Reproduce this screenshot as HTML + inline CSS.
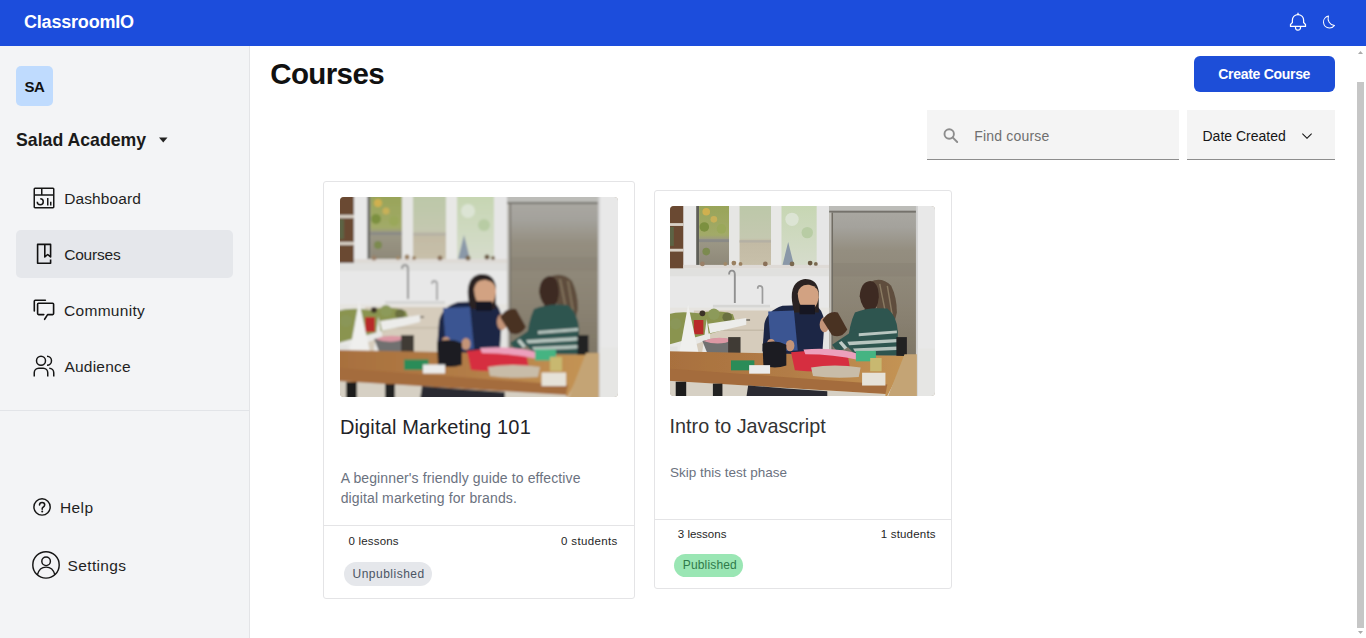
<!DOCTYPE html>
<html><head><meta charset="utf-8">
<style>
*{margin:0;padding:0;box-sizing:border-box}
html,body{width:1366px;height:638px;overflow:hidden;background:#fff;font-family:"Liberation Sans",sans-serif;color:#161616}
.a{position:absolute;white-space:nowrap;line-height:1}
svg.i{position:absolute;overflow:visible}
#hdr{position:absolute;left:0;top:0;width:1366px;height:46px;background:#1c4ddc}
#side{position:absolute;left:0;top:46px;width:250px;height:592px;background:#f3f4f6;border-right:1px solid #e3e4e7}
</style></head><body>
<div id="hdr"></div>
<div class="a" style="left:24px;top:12.7px;font-size:18px;font-weight:bold;color:#fff;letter-spacing:-0.2px">ClassroomIO</div>
<!-- bell -->
<svg class="i" style="left:1288px;top:12px" width="20" height="20" viewBox="0 0 32 32" fill="#fff"><path d="M28.707 19.293 26 16.586V13a10.014 10.014 0 0 0-9-9.95V1h-2v2.05A10.014 10.014 0 0 0 6 13v3.586l-2.707 2.707A1 1 0 0 0 3 20v3a1 1 0 0 0 1 1h7v.777a5.152 5.152 0 0 0 4.5 5.199A5.006 5.006 0 0 0 21 25v-1h7a1 1 0 0 0 1-1v-3a1 1 0 0 0-.293-.707zM19 25a3 3 0 0 1-6 0v-1h6zm8-3H5v-1.586l2.707-2.707A1 1 0 0 0 8 17v-4a8 8 0 0 1 16 0v4a1 1 0 0 0 .293.707L27 20.414z"/></svg>
<!-- moon -->
<svg class="i" style="left:1321px;top:13.5px" width="16" height="16" viewBox="0 0 32 32" fill="#fff"><path d="M13.503 5.414a15.076 15.076 0 0 0 11.593 18.194 11.113 11.113 0 0 1-7.975 3.39c-.138 0-.278.005-.418 0a11.094 11.094 0 0 1-3.2-21.584M14.98 3a1.002 1.002 0 0 0-.175.016 13.096 13.096 0 0 0 1.825 25.981c.164.006.328 0 .49 0a13.072 13.072 0 0 0 10.703-5.555 1.011 1.011 0 0 0-.783-1.565A13.08 13.08 0 0 1 15.89 4.38 1.015 1.015 0 0 0 14.98 3z"/></svg>

<div id="side"></div>
<div style="position:absolute;left:16px;top:66px;width:37px;height:40px;background:#bfdbfe;border-radius:5px"></div>
<div class="a" style="left:24.5px;top:79px;font-size:15px;font-weight:bold;letter-spacing:-0.5px;color:#111">SA</div>
<div class="a" style="left:16px;top:132px;font-size:17.7px;font-weight:bold;color:#1a1a1a">Salad Academy</div>
<svg class="i" style="left:159px;top:137px" width="9" height="6" viewBox="0 0 9 6"><path d="M0 0.5H8.5L4.25 5.5z" fill="#222"/></svg>

<div style="position:absolute;left:16px;top:230px;width:217px;height:48px;background:#e5e7eb;border-radius:5px"></div>
<!-- dashboard icon -->
<svg class="i" style="left:32px;top:186px" width="24" height="24" viewBox="0 0 32 32" fill="#161616"><path d="M24 21h2v5h-2zM20 16h2v10h-2zM11 26a5.006 5.006 0 0 1-5-5h2a3 3 0 1 0 3-3v-2a5 5 0 0 1 0 10z"/><path d="M28 2H4a2.002 2.002 0 0 0-2 2v24a2.002 2.002 0 0 0 2 2h24a2.003 2.003 0 0 0 2-2V4a2.002 2.002 0 0 0-2-2zm0 9H14V4h14zM12 4v7H4V4zM4 28V13h24l.002 15z"/></svg>
<div class="a" style="left:64.2px;top:190.6px;font-size:15.5px;letter-spacing:0.1px;color:#1f1f1f">Dashboard</div>
<!-- courses icon -->
<svg class="i" style="left:0;top:0" width="1" height="1"><path d="M50.6 259.4V263.3H37.6V244.4H50.6V256.9L47.7 254.5L44.8 256.9V244.4" fill="none" stroke="#111" stroke-width="1.6" stroke-linejoin="round"/></svg>
<div class="a" style="left:64.2px;top:246.9px;font-size:15.5px;letter-spacing:-0.2px;color:#1f1f1f">Courses</div>
<!-- community icon -->
<svg class="i" style="left:0;top:0" width="1" height="1"><path d="M34.3 311V301.3Q34.3 300.3 35.3 300.3H45.4" fill="none" stroke="#111" stroke-width="1.6" stroke-linecap="round"/><path d="M43.8 314.6H38.6Q37.6 314.6 37.6 313.6V304.3Q37.6 303.3 38.6 303.3H52.6Q53.6 303.3 53.6 304.3V313.6Q53.6 314.6 52.6 314.6H47.6L44.6 319.3" fill="none" stroke="#111" stroke-width="1.6" stroke-linecap="round" stroke-linejoin="round"/></svg>
<div class="a" style="left:64px;top:302.9px;font-size:15.5px;letter-spacing:0.3px;color:#1f1f1f">Community</div>
<!-- audience icon -->
<svg class="i" style="left:32px;top:354px" width="24" height="24" viewBox="0 0 32 32" fill="#161616"><path d="M30 30h-2v-5a5.006 5.006 0 0 0-5-5v-2a7.008 7.008 0 0 1 7 7zM22 30h-2v-5a5.006 5.006 0 0 0-5-5H9a5.006 5.006 0 0 0-5 5v5H2v-5a7.008 7.008 0 0 1 7-7h6a7.008 7.008 0 0 1 7 7zM20 2v2a5 5 0 0 1 0 10v2a7 7 0 0 0 0-14zM12 4a5 5 0 1 1-5 5 5 5 0 0 1 5-5m0-2a7 7 0 1 0 7 7 7 7 0 0 0-7-7z"/></svg>
<div class="a" style="left:64.5px;top:358.6px;font-size:15.5px;letter-spacing:0.2px;color:#1f1f1f">Audience</div>

<div style="position:absolute;left:0;top:410px;width:249px;height:1px;background:#e2e4e8"></div>
<!-- help -->
<svg class="i" style="left:0;top:0" width="1" height="1"><circle cx="42.05" cy="506.95" r="8.15" fill="none" stroke="#161616" stroke-width="1.45"/><path d="M39.5 505Q39.5 502.4 42.1 502.4Q44.7 502.4 44.7 504.8Q44.7 506.3 43.1 507.2Q42.2 507.7 42.2 508.8V509.2" fill="none" stroke="#161616" stroke-width="1.55" stroke-linecap="round"/><circle cx="42.2" cy="511.6" r="1" fill="#161616"/></svg>
<div class="a" style="left:60px;top:500.1px;font-size:15.5px;letter-spacing:0.4px;color:#1f1f1f">Help</div>
<!-- settings -->
<svg class="i" style="left:0;top:0" width="1" height="1"><circle cx="46" cy="564.9" r="13.2" fill="none" stroke="#161616" stroke-width="1.45"/><circle cx="46.1" cy="561.3" r="4.3" fill="none" stroke="#161616" stroke-width="1.45"/><path d="M37.3 575Q39.3 567.1 46.1 567.1Q52.9 567.1 55 575" fill="none" stroke="#161616" stroke-width="1.45"/></svg>
<div class="a" style="left:67.6px;top:557.9px;font-size:15.5px;letter-spacing:0.35px;color:#1f1f1f">Settings</div>

<!-- main -->
<div class="a" style="left:270.2px;top:59.1px;font-size:29.5px;font-weight:bold;letter-spacing:-0.6px;color:#111">Courses</div>
<div style="position:absolute;left:1194px;top:56px;width:141px;height:36px;background:#1d4ed8;border-radius:6px"></div>
<div class="a" style="left:1218.3px;top:66.85px;font-size:14px;font-weight:bold;letter-spacing:-0.3px;color:#fff">Create Course</div>

<div style="position:absolute;left:927px;top:110px;width:252px;height:50px;background:#f4f4f4;border-bottom:1px solid #8d8d8d"></div>
<svg class="i" style="left:0;top:0" width="1" height="1"><circle cx="949.2" cy="134" r="4.7" fill="none" stroke="#8d8d8d" stroke-width="1.9"/><path d="M952.6 137.4L957.2 142" stroke="#8d8d8d" stroke-width="1.9" stroke-linecap="round"/></svg>
<div class="a" style="left:974.2px;top:128.95px;font-size:14px;letter-spacing:0.2px;color:#6f6f6f">Find course</div>
<div style="position:absolute;left:1187px;top:110px;width:148px;height:50px;background:#f4f4f4;border-bottom:1px solid #8d8d8d"></div>
<div class="a" style="left:1202.5px;top:128.75px;font-size:14px;color:#161616">Date Created</div>
<svg class="i" style="left:1299px;top:128px" width="16" height="16" viewBox="0 0 32 32" fill="#161616"><path d="M16 22 6 12l1.4-1.4 8.6 8.6 8.6-8.6L26 12z"/></svg>

<!-- card 1 -->
<div style="position:absolute;left:323px;top:181px;width:312px;height:418px;border:1px solid #e4e4e6;border-radius:3px;background:#fff"></div>
<div style="position:absolute;left:324px;top:525px;width:310px;height:1px;background:#e4e4e6"></div>
<div id="ph1" style="position:absolute;left:340px;top:197px;width:278px;height:200px;border-radius:4px;overflow:hidden;background:#a89a84"><svg viewBox="0 0 278 200" preserveAspectRatio="none" width="100%" height="100%">
<defs>
<filter id="bl" x="-5%" y="-5%" width="110%" height="110%"><feGaussianBlur stdDeviation="0.8"/></filter>
<linearGradient id="fr" x1="0" y1="0" x2="0" y2="1"><stop offset="0" stop-color="#acaaa4"/><stop offset="0.15" stop-color="#a4a29c"/><stop offset="0.3" stop-color="#948e80"/><stop offset="0.7" stop-color="#8a8272"/><stop offset="1" stop-color="#7e7666"/></linearGradient>
<linearGradient id="p1" x1="0" y1="0" x2="0" y2="1"><stop offset="0" stop-color="#98a458"/><stop offset="0.5" stop-color="#a2aa68"/><stop offset="0.58" stop-color="#9c9886"/><stop offset="1" stop-color="#8e8878"/></linearGradient>
<linearGradient id="p2" x1="0" y1="0" x2="0" y2="1"><stop offset="0" stop-color="#bcc8a8"/><stop offset="0.55" stop-color="#c4c8b0"/><stop offset="0.6" stop-color="#c2baa4"/><stop offset="1" stop-color="#c8c0aa"/></linearGradient>
<linearGradient id="p3" x1="0" y1="0" x2="0" y2="1"><stop offset="0" stop-color="#c6d6b2"/><stop offset="1" stop-color="#d6dccc"/></linearGradient>
<linearGradient id="tb" x1="0" y1="0" x2="1" y2="0"><stop offset="0" stop-color="#a8703e"/><stop offset="0.5" stop-color="#b27c46"/><stop offset="1" stop-color="#c49454"/></linearGradient>
</defs>
<g filter="url(#bl)">
<rect x="-2" y="-2" width="282" height="204" fill="#e4e4e2"/>
<!-- shelf -->
<rect x="-2" y="-2" width="16.5" height="68" fill="#6a4a30"/>
<rect x="-2" y="18" width="16" height="3" fill="#d8d0c6"/>
<rect x="-2" y="45" width="16" height="3" fill="#d8d0c6"/>
<rect x="-2" y="22" width="6" height="20" fill="#5c6444"/>
<!-- window -->
<rect x="14" y="-2" width="14" height="68" fill="#e8e8e8"/>
<rect x="27.5" y="-2" width="3" height="65" fill="#5e5e58"/>
<rect x="30.5" y="-2" width="31.5" height="65" fill="url(#p1)"/>
<circle cx="38" cy="6" r="4" fill="#d0b050"/><circle cx="46" cy="14" r="3.5" fill="#c8b058"/><circle cx="36" cy="22" r="5" fill="#7c9040"/><circle cx="54" cy="24" r="5" fill="#9aa85a"/><circle cx="38" cy="48" r="4" fill="#7c8a50"/>
<rect x="30.5" y="35" width="31.5" height="3" fill="#8a8a86"/>
<rect x="62" y="-2" width="11" height="68" fill="#e6e6e4"/>
<rect x="73" y="-2" width="33" height="65" fill="url(#p2)"/>
<rect x="73" y="36" width="33" height="2.5" fill="#b4b0a4"/>
<rect x="106" y="-2" width="11" height="68" fill="#e8e8e6"/>
<rect x="117" y="-2" width="37" height="65" fill="url(#p3)"/>
<circle cx="128" cy="14" r="7" fill="#dce4d4"/><circle cx="144" cy="28" r="6" fill="#b8cca4"/>
<path d="M118 62 L124 38 L130 62z" fill="#8a98a8"/>
<rect x="154" y="-2" width="13" height="68" fill="#e6e6e6"/>
<rect x="14" y="62" width="153" height="4" fill="#dedad6"/>
<circle cx="34" cy="61" r="2.5" fill="#9a8068"/><circle cx="58" cy="61" r="2" fill="#a08868"/><circle cx="67" cy="60" r="2.5" fill="#9a8060"/><circle cx="74" cy="61" r="2" fill="#9a8060"/><circle cx="100" cy="61" r="2.5" fill="#8a7058"/><circle cx="128" cy="61" r="2.5" fill="#7a6850"/><circle cx="147" cy="60" r="2.5" fill="#6a5840"/><circle cx="153" cy="61" r="2" fill="#7a6850"/>
<!-- wall -->
<rect x="-2" y="66" width="169" height="43" fill="#e8e8e8"/>
<rect x="-2" y="66" width="169" height="8" fill="#e0e0de"/>
<path d="M68 102 V72 Q68 68 65 68 Q62 68 62 72" fill="none" stroke="#909090" stroke-width="2"/>
<path d="M97 103 V87 Q97 84 94 84 Q92 84 92 87" fill="none" stroke="#9c9c9c" stroke-width="1.8"/>
<rect x="45" y="104" width="60" height="3" fill="#d6d6d4"/>
<!-- fridge -->
<rect x="167" y="-2" width="92" height="162" fill="url(#fr)"/>
<rect x="167" y="-2" width="92" height="7" fill="#bcbcb8"/>
<rect x="167" y="5" width="92" height="2" fill="#74726c"/>
<rect x="167" y="7" width="2.5" height="150" fill="#c0beb8"/>
<rect x="169.5" y="7" width="1.5" height="150" fill="#706c64"/>
<rect x="171" y="60" width="88" height="14" fill="#7e786c" opacity="0.25"/>
<!-- right wall -->
<rect x="259" y="-2" width="21" height="204" fill="#e8e8e8"/>
<rect x="258" y="-2" width="2" height="204" fill="#d0d0d0"/>
<rect x="260" y="150" width="20" height="52" fill="#e6e6e4"/>
<!-- counter -->
<rect x="-2" y="107" width="169" height="5" fill="#e6e4e0"/>
<rect x="25" y="110" width="80" height="47" fill="#d6ccbc"/>
<rect x="72" y="119" width="12" height="2" fill="#857e74"/>
<rect x="25" y="130" width="80" height="1.5" fill="#c4baa8"/>
<!-- plants -->
<path d="M-2 114 Q10 110 30 113 Q50 108 66 114 L70 126 L-2 148z" fill="#8a9450"/>
<circle cx="6" cy="124" r="6" fill="#8a9658"/><circle cx="46" cy="114" r="6" fill="#8c9a5a"/><circle cx="60" cy="117" r="5" fill="#6a7040"/><circle cx="34" cy="113" r="3" fill="#3a3028"/>
<rect x="25" y="120" width="10" height="15" fill="#b82a2a"/>
<path d="M40 124 L80 118 L80 125 L42 134z" fill="#ececea"/>
<path d="M-2 146 L42 134 L42 140 L-2 156z" fill="#e8e8e6"/>
<rect x="-2" y="148" width="10" height="18" fill="#e2e2e0"/>
<!-- cones -->
<path d="M19 104 L8 164 L32 164z" fill="#efefed"/>
<path d="M38.5 119 L33 160 L44 160z" fill="#e8e8e6"/>
<!-- bowl -->
<path d="M34 142 Q50 137 67 141 L62 157 Q50 162 40 157z" fill="#707070"/>
<path d="M35 142 Q50 136 66 141 Q52 148 35 142z" fill="#dc98a4"/>
<path d="M42 158 L58 158 L56 162 L44 162z" fill="#909090"/>
<rect x="61" y="138" width="13" height="17" fill="#403a36"/>
<!-- woman 1 -->
<path d="M97 152 L99 124 Q102 110 118 105 L152 104 Q160 108 162 122 L160 152 L130 160 L100 160z" fill="#1e2644"/>
<path d="M128 100 Q126 80 140 77 Q154 76 156 90 L156 112 L130 112z" fill="#2a2420"/>
<path d="M134 92 Q136 82 146 83 Q157 85 156 96 Q154 110 144 110 Q135 108 134 92z" fill="#d2a282"/>
<rect x="136" y="104" width="16" height="10" fill="#161620"/>
<path d="M103 111 L130 110 L134 152 L106 153z" fill="#3a5592"/>
<ellipse cx="162" cy="125" rx="5" ry="8" fill="#c49478"/>
<ellipse cx="126" cy="147" rx="4.5" ry="6" fill="#c49478"/>
<ellipse cx="106" cy="144" rx="4" ry="4" fill="#c49478"/>
<!-- woman 2 -->
<path d="M210 80 Q222 74 232 84 Q238 96 238 112 L236 120 L222 118 L214 100z" fill="#5e4e3e"/>
<path d="M220 82 L226 112 M228 84 L233 114" stroke="#8a7a62" stroke-width="1.5" fill="none"/>
<path d="M199 95 Q200 80 210 79 Q219 80 219 96 Q218 110 210 111 Q201 109 199 95z" fill="#3e2a22"/>
<path d="M204 108 L218 108 L219 116 L206 116z" fill="#3a2a24"/>
<path d="M194 112 Q208 106 228 108 Q238 116 239 132 L239 157 L196 158 L186 148 Q188 124 194 112z" fill="#2f5450"/>
<path d="M194 130 L170 146 L176 154 L199 142z" fill="#2f5450"/>
<path d="M198 134 L238 131 L238 134 L198 137z" fill="#b8c6c0"/>
<path d="M186 143 L238 140 L238 143.5 L188 146.5z" fill="#b8c6c0"/>
<path d="M192 150 L238 148 L238 151.5 L194 153.5z" fill="#b4c2bc"/>
<path d="M180 142 L186 149 L183 151 L177 144z" fill="#c0ccc6"/>
<path d="M160 120 Q166 110 176 112 L186 130 Q180 140 170 136z" fill="#4a3024"/>
<rect x="237.5" y="138" width="11" height="21" fill="#222224"/>
<!-- table -->
<path d="M-2 153 L246 158 L247 162 L228 200 L-2 200z" fill="url(#tb)"/>
<path d="M-2 171 L228 188 L226 198 L-2 184z" fill="#a46c3c"/>
<path d="M-2 184 L226 198 L226 202 L-2 202z" fill="#d6d0c4"/>
<rect x="6" y="185" width="11" height="17" fill="#1e1e1e"/>
<rect x="45" y="187" width="10" height="15" fill="#222"/>
<path d="M82 189 L122 192 L165 195 L165 202 L80 202z" fill="#2a2a30"/>
<path d="M246 156 L259 156 L259 202 L228 202z" fill="#c4a474"/>
<!-- items -->
<path d="M97 145 Q110 140 122 146 L122 168 Q110 172 98 168z" fill="#1c1c22"/>
<path d="M127 154 Q160 150 186 154 L189 172 Q160 176 131 173z" fill="#d62e40"/>
<path d="M140 151 Q175 148 203 157 L198 162 Q172 156 142 156z" fill="#eca0bc"/>
<path d="M148 170 Q172 166 200 170 L198 180 Q172 182 150 179z" fill="#c8bca8"/>
<rect x="64" y="162.5" width="24.5" height="10.5" fill="#2c8c58"/>
<rect x="83" y="167.5" width="22" height="9" fill="#ebebea"/>
<rect x="195" y="152.5" width="21" height="11" fill="#44b482"/>
<rect x="210" y="160" width="12" height="14" fill="#c8b870"/>
<rect x="201.5" y="175.5" width="24.5" height="13.5" fill="#e6e2d8"/>
</g>
</svg>






</div>
<div class="a" style="left:339.9px;top:416.9px;font-size:20px;letter-spacing:0.15px;color:#1f2328">Digital Marketing 101</div>
<div class="a" style="left:340.7px;top:467.5px;font-size:14px;line-height:20px;letter-spacing:0.12px;color:#6b7280">A beginner's friendly guide to effective<br>digital marketing for brands.</div>
<div class="a" style="left:348.4px;top:535.8px;font-size:11.5px;letter-spacing:0.2px;color:#1f1f1f">0 lessons</div>
<div class="a" style="left:561px;top:535.8px;font-size:11.5px;letter-spacing:0.35px;color:#1f1f1f">0 students</div>
<div style="position:absolute;left:344px;top:562px;width:88px;height:24px;background:#e5e7eb;border-radius:12px"></div>
<div class="a" style="left:352.5px;top:567.5px;font-size:12px;letter-spacing:0.5px;color:#4b5563">Unpublished</div>

<!-- card 2 -->
<div style="position:absolute;left:654px;top:190px;width:298px;height:399px;border:1px solid #e4e4e6;border-radius:3px;background:#fff"></div>
<div style="position:absolute;left:655px;top:519px;width:296px;height:1px;background:#e4e4e6"></div>
<div id="ph2" style="position:absolute;left:670px;top:206px;width:265px;height:190px;border-radius:4px;overflow:hidden;background:#a89a84"><svg viewBox="0 0 278 200" preserveAspectRatio="none" width="100%" height="100%">
<defs>
<filter id="bl2" x="-5%" y="-5%" width="110%" height="110%"><feGaussianBlur stdDeviation="0.8"/></filter>
<linearGradient id="fr2" x1="0" y1="0" x2="0" y2="1"><stop offset="0" stop-color="#acaaa4"/><stop offset="0.15" stop-color="#a4a29c"/><stop offset="0.3" stop-color="#948e80"/><stop offset="0.7" stop-color="#8a8272"/><stop offset="1" stop-color="#7e7666"/></linearGradient>
<linearGradient id="p12" x1="0" y1="0" x2="0" y2="1"><stop offset="0" stop-color="#98a458"/><stop offset="0.5" stop-color="#a2aa68"/><stop offset="0.58" stop-color="#9c9886"/><stop offset="1" stop-color="#8e8878"/></linearGradient>
<linearGradient id="p22" x1="0" y1="0" x2="0" y2="1"><stop offset="0" stop-color="#bcc8a8"/><stop offset="0.55" stop-color="#c4c8b0"/><stop offset="0.6" stop-color="#c2baa4"/><stop offset="1" stop-color="#c8c0aa"/></linearGradient>
<linearGradient id="p32" x1="0" y1="0" x2="0" y2="1"><stop offset="0" stop-color="#c6d6b2"/><stop offset="1" stop-color="#d6dccc"/></linearGradient>
<linearGradient id="tb2" x1="0" y1="0" x2="1" y2="0"><stop offset="0" stop-color="#a8703e"/><stop offset="0.5" stop-color="#b27c46"/><stop offset="1" stop-color="#c49454"/></linearGradient>
</defs>
<g filter="url(#bl2)">
<rect x="-2" y="-2" width="282" height="204" fill="#e4e4e2"/>
<!-- shelf -->
<rect x="-2" y="-2" width="16.5" height="68" fill="#6a4a30"/>
<rect x="-2" y="18" width="16" height="3" fill="#d8d0c6"/>
<rect x="-2" y="45" width="16" height="3" fill="#d8d0c6"/>
<rect x="-2" y="22" width="6" height="20" fill="#5c6444"/>
<!-- window -->
<rect x="14" y="-2" width="14" height="68" fill="#e8e8e8"/>
<rect x="27.5" y="-2" width="3" height="65" fill="#5e5e58"/>
<rect x="30.5" y="-2" width="31.5" height="65" fill="url(#p12)"/>
<circle cx="38" cy="6" r="4" fill="#d0b050"/><circle cx="46" cy="14" r="3.5" fill="#c8b058"/><circle cx="36" cy="22" r="5" fill="#7c9040"/><circle cx="54" cy="24" r="5" fill="#9aa85a"/><circle cx="38" cy="48" r="4" fill="#7c8a50"/>
<rect x="30.5" y="35" width="31.5" height="3" fill="#8a8a86"/>
<rect x="62" y="-2" width="11" height="68" fill="#e6e6e4"/>
<rect x="73" y="-2" width="33" height="65" fill="url(#p22)"/>
<rect x="73" y="36" width="33" height="2.5" fill="#b4b0a4"/>
<rect x="106" y="-2" width="11" height="68" fill="#e8e8e6"/>
<rect x="117" y="-2" width="37" height="65" fill="url(#p32)"/>
<circle cx="128" cy="14" r="7" fill="#dce4d4"/><circle cx="144" cy="28" r="6" fill="#b8cca4"/>
<path d="M118 62 L124 38 L130 62z" fill="#8a98a8"/>
<rect x="154" y="-2" width="13" height="68" fill="#e6e6e6"/>
<rect x="14" y="62" width="153" height="4" fill="#dedad6"/>
<circle cx="34" cy="61" r="2.5" fill="#9a8068"/><circle cx="58" cy="61" r="2" fill="#a08868"/><circle cx="67" cy="60" r="2.5" fill="#9a8060"/><circle cx="74" cy="61" r="2" fill="#9a8060"/><circle cx="100" cy="61" r="2.5" fill="#8a7058"/><circle cx="128" cy="61" r="2.5" fill="#7a6850"/><circle cx="147" cy="60" r="2.5" fill="#6a5840"/><circle cx="153" cy="61" r="2" fill="#7a6850"/>
<!-- wall -->
<rect x="-2" y="66" width="169" height="43" fill="#e8e8e8"/>
<rect x="-2" y="66" width="169" height="8" fill="#e0e0de"/>
<path d="M68 102 V72 Q68 68 65 68 Q62 68 62 72" fill="none" stroke="#909090" stroke-width="2"/>
<path d="M97 103 V87 Q97 84 94 84 Q92 84 92 87" fill="none" stroke="#9c9c9c" stroke-width="1.8"/>
<rect x="45" y="104" width="60" height="3" fill="#d6d6d4"/>
<!-- fridge -->
<rect x="167" y="-2" width="92" height="162" fill="url(#fr2)"/>
<rect x="167" y="-2" width="92" height="7" fill="#bcbcb8"/>
<rect x="167" y="5" width="92" height="2" fill="#74726c"/>
<rect x="167" y="7" width="2.5" height="150" fill="#c0beb8"/>
<rect x="169.5" y="7" width="1.5" height="150" fill="#706c64"/>
<rect x="171" y="60" width="88" height="14" fill="#7e786c" opacity="0.25"/>
<!-- right wall -->
<rect x="259" y="-2" width="21" height="204" fill="#e8e8e8"/>
<rect x="258" y="-2" width="2" height="204" fill="#d0d0d0"/>
<rect x="260" y="150" width="20" height="52" fill="#e6e6e4"/>
<!-- counter -->
<rect x="-2" y="107" width="169" height="5" fill="#e6e4e0"/>
<rect x="25" y="110" width="80" height="47" fill="#d6ccbc"/>
<rect x="72" y="119" width="12" height="2" fill="#857e74"/>
<rect x="25" y="130" width="80" height="1.5" fill="#c4baa8"/>
<!-- plants -->
<path d="M-2 114 Q10 110 30 113 Q50 108 66 114 L70 126 L-2 148z" fill="#8a9450"/>
<circle cx="6" cy="124" r="6" fill="#8a9658"/><circle cx="46" cy="114" r="6" fill="#8c9a5a"/><circle cx="60" cy="117" r="5" fill="#6a7040"/><circle cx="34" cy="113" r="3" fill="#3a3028"/>
<rect x="25" y="120" width="10" height="15" fill="#b82a2a"/>
<path d="M40 124 L80 118 L80 125 L42 134z" fill="#ececea"/>
<path d="M-2 146 L42 134 L42 140 L-2 156z" fill="#e8e8e6"/>
<rect x="-2" y="148" width="10" height="18" fill="#e2e2e0"/>
<!-- cones -->
<path d="M19 104 L8 164 L32 164z" fill="#efefed"/>
<path d="M38.5 119 L33 160 L44 160z" fill="#e8e8e6"/>
<!-- bowl -->
<path d="M34 142 Q50 137 67 141 L62 157 Q50 162 40 157z" fill="#707070"/>
<path d="M35 142 Q50 136 66 141 Q52 148 35 142z" fill="#dc98a4"/>
<path d="M42 158 L58 158 L56 162 L44 162z" fill="#909090"/>
<rect x="61" y="138" width="13" height="17" fill="#403a36"/>
<!-- woman 1 -->
<path d="M97 152 L99 124 Q102 110 118 105 L152 104 Q160 108 162 122 L160 152 L130 160 L100 160z" fill="#1e2644"/>
<path d="M128 100 Q126 80 140 77 Q154 76 156 90 L156 112 L130 112z" fill="#2a2420"/>
<path d="M134 92 Q136 82 146 83 Q157 85 156 96 Q154 110 144 110 Q135 108 134 92z" fill="#d2a282"/>
<rect x="136" y="104" width="16" height="10" fill="#161620"/>
<path d="M103 111 L130 110 L134 152 L106 153z" fill="#3a5592"/>
<ellipse cx="162" cy="125" rx="5" ry="8" fill="#c49478"/>
<ellipse cx="126" cy="147" rx="4.5" ry="6" fill="#c49478"/>
<ellipse cx="106" cy="144" rx="4" ry="4" fill="#c49478"/>
<!-- woman 2 -->
<path d="M210 80 Q222 74 232 84 Q238 96 238 112 L236 120 L222 118 L214 100z" fill="#5e4e3e"/>
<path d="M220 82 L226 112 M228 84 L233 114" stroke="#8a7a62" stroke-width="1.5" fill="none"/>
<path d="M199 95 Q200 80 210 79 Q219 80 219 96 Q218 110 210 111 Q201 109 199 95z" fill="#3e2a22"/>
<path d="M204 108 L218 108 L219 116 L206 116z" fill="#3a2a24"/>
<path d="M194 112 Q208 106 228 108 Q238 116 239 132 L239 157 L196 158 L186 148 Q188 124 194 112z" fill="#2f5450"/>
<path d="M194 130 L170 146 L176 154 L199 142z" fill="#2f5450"/>
<path d="M198 134 L238 131 L238 134 L198 137z" fill="#b8c6c0"/>
<path d="M186 143 L238 140 L238 143.5 L188 146.5z" fill="#b8c6c0"/>
<path d="M192 150 L238 148 L238 151.5 L194 153.5z" fill="#b4c2bc"/>
<path d="M180 142 L186 149 L183 151 L177 144z" fill="#c0ccc6"/>
<path d="M160 120 Q166 110 176 112 L186 130 Q180 140 170 136z" fill="#4a3024"/>
<rect x="237.5" y="138" width="11" height="21" fill="#222224"/>
<!-- table -->
<path d="M-2 153 L246 158 L247 162 L228 200 L-2 200z" fill="url(#tb2)"/>
<path d="M-2 171 L228 188 L226 198 L-2 184z" fill="#a46c3c"/>
<path d="M-2 184 L226 198 L226 202 L-2 202z" fill="#d6d0c4"/>
<rect x="6" y="185" width="11" height="17" fill="#1e1e1e"/>
<rect x="45" y="187" width="10" height="15" fill="#222"/>
<path d="M82 189 L122 192 L165 195 L165 202 L80 202z" fill="#2a2a30"/>
<path d="M246 156 L259 156 L259 202 L228 202z" fill="#c4a474"/>
<!-- items -->
<path d="M97 145 Q110 140 122 146 L122 168 Q110 172 98 168z" fill="#1c1c22"/>
<path d="M127 154 Q160 150 186 154 L189 172 Q160 176 131 173z" fill="#d62e40"/>
<path d="M140 151 Q175 148 203 157 L198 162 Q172 156 142 156z" fill="#eca0bc"/>
<path d="M148 170 Q172 166 200 170 L198 180 Q172 182 150 179z" fill="#c8bca8"/>
<rect x="64" y="162.5" width="24.5" height="10.5" fill="#2c8c58"/>
<rect x="83" y="167.5" width="22" height="9" fill="#ebebea"/>
<rect x="195" y="152.5" width="21" height="11" fill="#44b482"/>
<rect x="210" y="160" width="12" height="14" fill="#c8b870"/>
<rect x="201.5" y="175.5" width="24.5" height="13.5" fill="#e6e2d8"/>
</g>
</svg>






</div>
<div class="a" style="left:669.6px;top:416.6px;font-size:19.8px;color:#333">Intro to Javascript</div>
<div class="a" style="left:670px;top:466.4px;font-size:13.5px;color:#6b7280">Skip this test phase</div>
<div class="a" style="left:677.8px;top:529.2px;font-size:11.5px;color:#1f1f1f">3 lessons</div>
<div class="a" style="left:880.7px;top:529.2px;font-size:11.5px;letter-spacing:0.2px;color:#1f1f1f">1 students</div>
<div style="position:absolute;left:674px;top:554px;width:69px;height:23px;background:#9ae6b4;border-radius:12px"></div>
<div class="a" style="left:682.8px;top:559px;font-size:12px;letter-spacing:0.15px;color:#2f7a4a">Published</div>

<!-- scrollbar -->
<div style="position:absolute;left:1357px;top:82px;width:7px;height:546px;background:#c6c6c6"></div>
<svg class="i" style="left:0;top:0" width="1" height="1"><path d="M1358 54H1363L1360.5 51z" fill="#ababab"/><path d="M1358 631H1363L1360.5 634z" fill="#ababab"/></svg>
</body></html>
